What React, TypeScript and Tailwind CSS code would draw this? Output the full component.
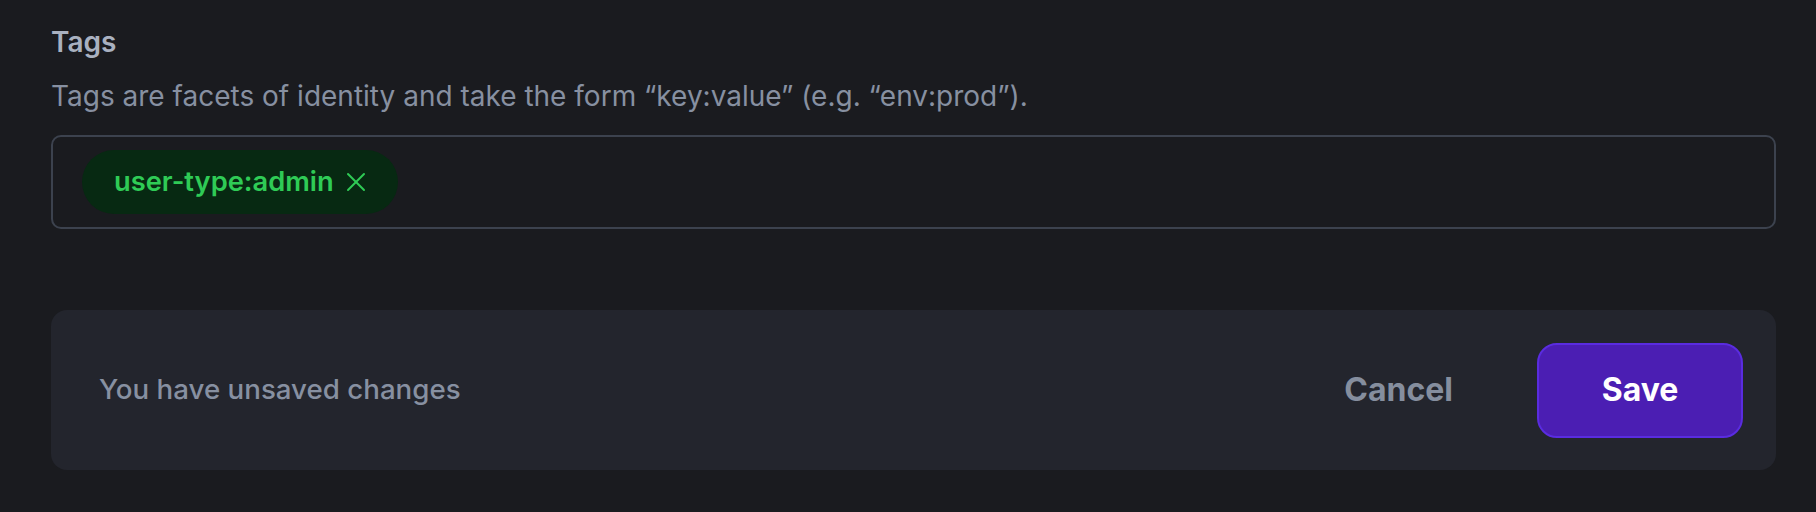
import React from 'react';

const CloseIcon = () => (
  <svg width="20" height="20" viewBox="0 0 20 20" fill="none" stroke="currentColor" strokeWidth="2" strokeLinecap="round">
    <path d="M2 2L18 18" />
    <path d="M18 2L2 18" />
  </svg>
);

const App = () => {
  return (
    <div className="min-h-[512px] w-full bg-[#1a1b1f] pt-[22px] pl-[51px] pr-[40px] font-['Inter',sans-serif]">
      {/* Tags field */}
      <h3 className="text-[28px] leading-[40px] font-semibold text-[#a9b1c0]">Tags</h3>
      <p className="mt-[14px] text-[28px] leading-[40px] text-[#8790a1]">
        Tags are facets of identity and take the form “key:value” (e.g. “env:prod”).
      </p>

      <div className="mt-[19px] flex items-center rounded-[10px] border-2 border-[#3c424e] py-[13px] pl-[29px] pr-4">
        <span className="flex h-[64px] items-center gap-[12px] rounded-full bg-[#072912] pl-[32px] pr-[32px] text-[27.3px] font-semibold text-[#2fcb56]">
          user-type:admin
          <CloseIcon />
        </span>
      </div>

      {/* Unsaved changes bar */}
      <div className="mt-[81px] flex h-[160px] items-center justify-between rounded-[16px] bg-[#23252d] pl-[48px] pr-[33px]">
        <span className="text-[27.7px] font-medium text-[#8790a1]">You have unsaved changes</span>
        <div className="flex items-center gap-[44px]">
          <button className="h-[95px] px-[40px] text-[32px] font-bold text-[#858e9e]">Cancel</button>
          <button className="flex h-[95px] w-[206px] items-center justify-center rounded-[20px] border-2 border-[#5a2ce0] bg-[#4b1eb3] text-[32px] font-bold text-white">
            Save
          </button>
        </div>
      </div>
    </div>
  );
};

export default App;
